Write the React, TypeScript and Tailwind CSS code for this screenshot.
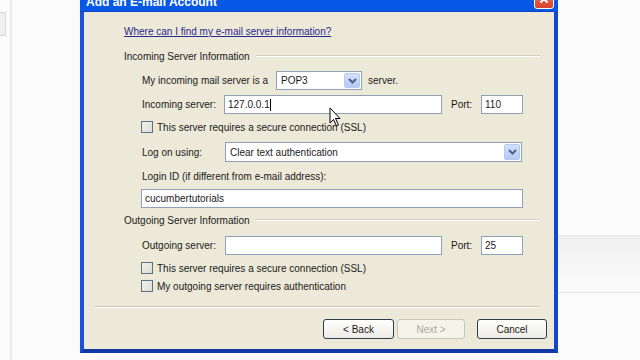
const Chevron = () => (
  <div className="w-[16px] h-full bg-gradient-to-b from-[#d3e0fd] to-[#b4c8f6] border border-[#b7c9f2] rounded-[2px] flex items-center justify-center">
    <svg width="9" height="6" viewBox="0 0 9 6">
      <polyline points="1,1 4.5,4.5 8,1" fill="none" stroke="#4d6185" strokeWidth="2" />
    </svg>
  </div>
);

const Select = ({ value, className }: { value: string; className: string }) => (
  <div className={`flex bg-white border border-[#8fa3b8] p-[1px] ${className}`}>
    <span className="flex-1 pl-[3px] flex items-center">{value}</span>
    <Chevron />
  </div>
);

const Input = ({ value, className, caret }: { value?: string; className: string; caret?: boolean }) => (
  <div className={`flex items-center bg-white border border-[#8fa3b8] pl-[3px] ${className}`}>
    {value}
    {caret && <span className="w-[1px] h-[12px] bg-black" />}
  </div>
);

const Check = ({ label, className = '' }: { label: string; className?: string }) => (
  <div className={`flex items-center h-[18px] pl-[57px] ${className}`}>
    <div className="w-[12px] h-[12px] border border-[#5e7184] bg-gradient-to-br from-[#f2f2ee] to-[#dcdcd4]" />
    <span className="ml-[4px]">{label}</span>
  </div>
);

const GroupHeader = ({ label, className }: { label: string; className: string }) => (
  <div className={`flex items-center h-[18px] pl-[40px] pr-[14px] ${className}`}>
    <span>{label}</span>
    <div className="flex-1 ml-[6px] h-[2px] border-t border-[#d2cfbd] border-b border-b-white" />
  </div>
);

const Button = ({ label, className, disabled }: { label: string; className: string; disabled?: boolean }) => (
  <div
    className={`h-[20px] flex items-center justify-center rounded-[3px] border ${
      disabled
        ? 'border-[#c9c7ba] bg-[#f5f4ea] text-[#aca899]'
        : 'border-[#2c3d52] bg-gradient-to-b from-[#ffffff] to-[#ecebe3] text-[#1b1b1b]'
    } ${className}`}
  >
    {label}
  </div>
);

const Dialog = () => (
  <div className="w-[478px] shrink-0 -mt-[18px] self-start flex flex-col">
    <div className="h-[30px] flex items-start bg-gradient-to-b from-[#0a5ae8] to-[#0757e6] rounded-t-[6px] border-b border-[#0b45c8]">
      <span className="pl-[6px] pt-[14px] leading-[12px] text-[12px] font-bold text-white">Add an E-mail Account</span>
      <div className="ml-auto mr-[4px] mt-[7px] w-[20px] h-[20px] rounded-[3px] border border-white bg-gradient-to-b from-[#e57a5c] to-[#d5432a] flex items-center justify-center">
        <svg width="10" height="10" viewBox="0 0 10 10">
          <path d="M1.5 1.5 L8.5 8.5 M8.5 1.5 L1.5 8.5" stroke="white" strokeWidth="2" />
        </svg>
      </div>
    </div>
    <div className="border-x-[4px] border-l-[#1d50dc] border-r-[#1546cf] border-b-[4px] border-b-[#1239a8] bg-[#ece9d8] flex flex-col">
      <div className="mt-[10px] h-[18px] pl-[40px] flex items-center">
        <span className="underline text-[#2a2a8c]">Where can I find my e-mail server information?</span>
      </div>
      <GroupHeader label="Incoming Server Information" className="mt-[7px]" />
      <div className="mt-[6px] h-[19px] pl-[58px] flex items-center">
        <span className="w-[134px]">My incoming mail server is a</span>
        <Select value="POP3" className="w-[86px] h-[19px]" />
        <span className="ml-[6px]">server.</span>
      </div>
      <div className="mt-[5px] h-[19px] pl-[58px] flex items-center">
        <span className="w-[82px]">Incoming server:</span>
        <Input value="127.0.0.1" caret className="w-[218px] h-[19px]" />
        <span className="ml-[9px] w-[30px]">Port:</span>
        <Input value="110" className="w-[42px] h-[19px]" />
      </div>
      <Check label="This server requires a secure connection (SSL)" className="mt-[4px]" />
      <div className="mt-[6px] h-[20px] pl-[58px] flex items-center">
        <span className="w-[83px]">Log on using:</span>
        <Select value="Clear text authentication" className="w-[297px] h-[20px]" />
      </div>
      <div className="mt-[5px] h-[18px] pl-[58px] flex items-center">Login ID (if different from e-mail address):</div>
      <div className="mt-[4px] pl-[57px]">
        <Input value="cucumbertutorials" className="w-[382px] h-[19px]" />
      </div>
      <GroupHeader label="Outgoing Server Information" className="mt-[3px]" />
      <div className="mt-[7px] h-[19px] pl-[58px] flex items-center">
        <span className="w-[83px]">Outgoing server:</span>
        <Input className="w-[217px] h-[19px]" />
        <span className="ml-[9px] w-[30px]">Port:</span>
        <Input value="25" className="w-[42px] h-[19px]" />
      </div>
      <Check label="This server requires a secure connection (SSL)" className="mt-[4px]" />
      <Check label="My outgoing server requires authentication" />
      <div className="mt-[11px] ml-[11px] w-[445px] h-[2px] border-t border-[#cbc7b3] border-b border-b-white" />
      <div className="mt-[11px] mb-[10px] pl-[239px] flex">
        <Button label="< Back" className="w-[71px]" />
        <Button label="Next >" disabled className="ml-[3px] w-[68px]" />
        <Button label="Cancel" className="ml-[12px] w-[70px]" />
      </div>
    </div>
  </div>
);

export default function App() {
  return (
    <div className="relative w-[640px] h-[360px] overflow-hidden bg-[#fbfbfb] font-['Liberation_Sans',Arial,sans-serif] text-[10px] text-[#1b1b1b]">
      <div className="flex h-full">
        <div className="w-[80px] shrink-0 flex">
          <div className="mt-[12px] w-[6px] h-[24px] border border-l-0 border-[#dadada] bg-[#f0f0f0]" />
          <div className="ml-[4px] w-[2px] bg-[#ebebeb]" />
        </div>
        <Dialog />
        <div className="flex-1 pt-[235px]">
          <div className="h-[58px] border-y border-[#e4e4e4] bg-gradient-to-b from-[#efefef] to-[#fcfcfc]" />
        </div>
      </div>
      <svg className="absolute left-[329px] top-[107px]" width="13" height="21" viewBox="0 0 13 21">
        <path d="M1 1 L1 16 L4.5 12.5 L7.5 19 L9.5 18 L6.5 11.5 L11 11.5 Z" fill="white" stroke="black" strokeWidth="1" />
      </svg>
    </div>
  );
}
